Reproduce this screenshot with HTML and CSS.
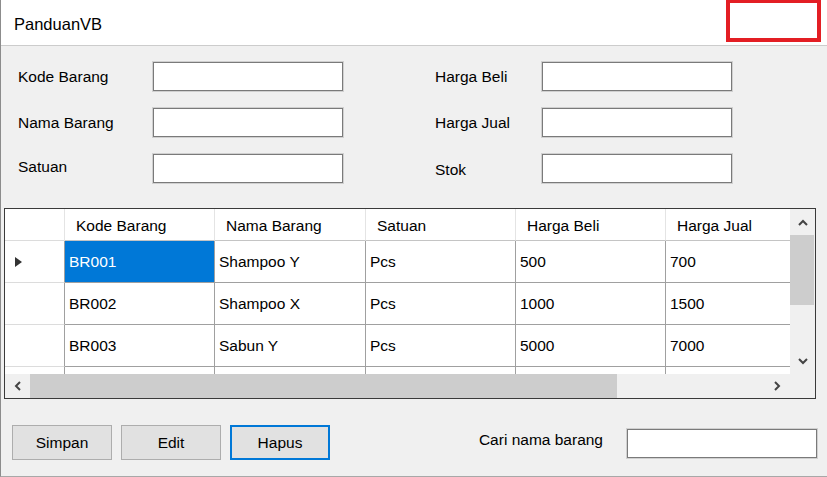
FILE: index.html
```html
<!DOCTYPE html>
<html lang="id">

<head>
  <meta charset="UTF-8">
  <meta name="viewport" content="width=device-width, initial-scale=1.0">
  <title>PanduanVB</title>
  <link rel="stylesheet" href="styles.css">
</head>

<body>
  <div class="window">
    <div class="titlebar">
      <span class="title">PanduanVB</span>
      <span class="mark"></span>
    </div>

    <!-- isian barang -->
    <div class="fields">
      <label>Kode Barang</label>
      <input type="text" class="box">
      <label class="right">Harga Beli</label>
      <input type="text" class="box">

      <label>Nama Barang</label>
      <input type="text" class="box">
      <label class="right">Harga Jual</label>
      <input type="text" class="box">

      <label class="up">Satuan</label>
      <input type="text" class="box">
      <label class="right down">Stok</label>
      <input type="text" class="box">
    </div>

    <!-- tabel data -->
    <div class="datagrid">
      <div class="grid-body">
        <table>
          <colgroup>
            <col style="width: 60px">
            <col style="width: 150px">
            <col style="width: 151px">
            <col style="width: 150px">
            <col style="width: 150px">
            <col style="width: 150px">
          </colgroup>
          <thead>
            <tr>
              <th class="rowhead"></th>
              <th>Kode Barang</th>
              <th>Nama Barang</th>
              <th>Satuan</th>
              <th>Harga Beli</th>
              <th>Harga Jual</th>
            </tr>
          </thead>
          <tbody>
            <tr>
              <td class="rowhead"><span class="pointer"></span></td>
              <td class="selected">BR001</td>
              <td>Shampoo Y</td>
              <td>Pcs</td>
              <td>500</td>
              <td>700</td>
            </tr>
            <tr>
              <td class="rowhead"></td>
              <td>BR002</td>
              <td>Shampoo X</td>
              <td>Pcs</td>
              <td>1000</td>
              <td>1500</td>
            </tr>
            <tr>
              <td class="rowhead"></td>
              <td>BR003</td>
              <td>Sabun Y</td>
              <td>Pcs</td>
              <td>5000</td>
              <td>7000</td>
            </tr>
            <tr>
              <td class="rowhead"></td>
              <td></td>
              <td></td>
              <td></td>
              <td></td>
              <td></td>
            </tr>
          </tbody>
        </table>
      </div>

      <div class="vscroll">
        <span class="arrow">
          <svg width="10" height="7" viewBox="0 0 10 7"><polyline points="1,6 5,2 9,6" /></svg>
        </span>
        <span class="thumb"></span>
        <span class="arrow bottom">
          <svg width="10" height="7" viewBox="0 0 10 7"><polyline points="1,1 5,5 9,1" /></svg>
        </span>
      </div>

      <div class="hscroll">
        <span class="arrow">
          <svg width="7" height="10" viewBox="0 0 7 10"><polyline points="6,1 2,5 6,9" /></svg>
        </span>
        <span class="thumb"></span>
        <span class="arrow right">
          <svg width="7" height="10" viewBox="0 0 7 10"><polyline points="1,1 5,5 1,9" /></svg>
        </span>
      </div>

      <div class="corner"></div>
    </div>

    <!-- tombol -->
    <div class="actions">
      <button>Simpan</button>
      <button>Edit</button>
      <button class="focus">Hapus</button>
      <label class="search-label">Cari nama barang</label>
      <input type="text" class="box search">
    </div>
  </div>
</body>

</html>
```

FILE: styles.css
```css
body {
  margin: 0;
  padding: 0;
  background-color: #f0f0f0;
  font-family: "Liberation Sans", Arial, sans-serif;
  font-size: 15.5px;
  color: #000;
}

.window {
  width: 827px;
  height: 477px;
  box-sizing: border-box;
  border-left: 1px solid #8c8c8c;
  border-bottom: 1px solid #a8a8a8;
  overflow: hidden;
}

/* title bar */
.titlebar {
  height: 45px;
  display: flex;
  align-items: center;
  background-color: #fff;
  border-bottom: 1px solid #cccccc;
  padding-left: 13px;
}

.title {
  font-size: 16.5px;
  padding-top: 3px;
}

.mark {
  align-self: flex-start;
  margin-left: auto;
  margin-right: 6px;
  width: 95px;
  height: 42px;
  box-sizing: border-box;
  border: 4px solid #e31e24;
  border-top-width: 3px;
}

/* fields */
.fields {
  display: grid;
  grid-template-columns: 135px 190px 199px 190px;
  grid-auto-rows: 29px;
  row-gap: 17px;
  align-items: center;
  padding: 16px 0 0 17px;
}

.fields label.right {
  padding-left: 92px;
}

.fields label.up {
  margin-top: -3px;
}

.fields label.down {
  margin-top: 3px;
}

.box {
  height: 29px;
  width: 190px;
  box-sizing: border-box;
  margin: 0;
  border: 1px solid #7a7a7a;
  box-shadow: 0 0 0 1px rgba(150, 150, 150, 0.35);
  background-color: #fff;
  font-family: inherit;
  font-size: 15.5px;
}

/* data grid */
.datagrid {
  margin: 25px 0 0 3px;
  width: 812px;
  box-sizing: border-box;
  border: 1px solid #3a3a3a;
  display: grid;
  grid-template-columns: 785px 25px;
  grid-template-rows: 165px 24px;
  background-color: #fff;
}

.grid-body {
  overflow: hidden;
}

table {
  table-layout: fixed;
  width: 811px;
  border-collapse: separate;
  border-spacing: 0;
}

th,
td {
  box-sizing: border-box;
  text-align: left;
  font-weight: normal;
  white-space: nowrap;
  overflow: hidden;
}

th {
  height: 32px;
  padding: 2px 0 0 11px;
  border-right: 1px solid #e4e4e4;
  border-bottom: 1px solid #c4c4c4;
}

td {
  height: 42px;
  padding: 0 0 0 4px;
  border-right: 1px solid #a0a0a0;
  border-bottom: 1px solid #a0a0a0;
}

td.rowhead {
  border-bottom-color: #dcdcdc;
  padding-left: 10px;
}

th.rowhead {
  border-bottom-color: #dcdcdc;
}

td.selected {
  background-color: #0078d7;
  color: #fff;
}

.pointer {
  display: inline-block;
  vertical-align: middle;
  width: 0;
  height: 0;
  border-left: 7px solid #333;
  border-top: 5.5px solid transparent;
  border-bottom: 5.5px solid transparent;
}

/* scrollbars */
.vscroll,
.hscroll,
.corner {
  background-color: #f0f0f0;
}

.vscroll {
  display: flex;
  flex-direction: column;
}

.hscroll {
  display: flex;
}

.arrow {
  display: flex;
  align-items: center;
  justify-content: center;
  flex: none;
}

.vscroll .arrow {
  height: 26px;
}

.hscroll .arrow {
  width: 25px;
}

.arrow polyline {
  fill: none;
  stroke: #444;
  stroke-width: 2;
}

.vscroll .thumb {
  height: 70px;
  margin-right: 1px;
  background-color: #cdcdcd;
}

.vscroll .bottom {
  margin-top: auto;
}

.hscroll .thumb {
  width: 587px;
  background-color: #cdcdcd;
}

.hscroll .right {
  margin-left: auto;
}

/* buttons */
.actions {
  display: flex;
  align-items: center;
  padding: 26px 10px 0 11px;
}

button {
  width: 100px;
  height: 35px;
  margin-right: 9px;
  background-color: #e1e1e1;
  border: 1px solid #adadad;
  font-family: inherit;
  font-size: 15.5px;
  color: #000;
}

button.focus {
  border: 2px solid #0078d7;
}

.search-label {
  margin-left: auto;
  margin-right: 24px;
  margin-top: -5px;
}

.search {
  margin-top: 2px;
}
```
